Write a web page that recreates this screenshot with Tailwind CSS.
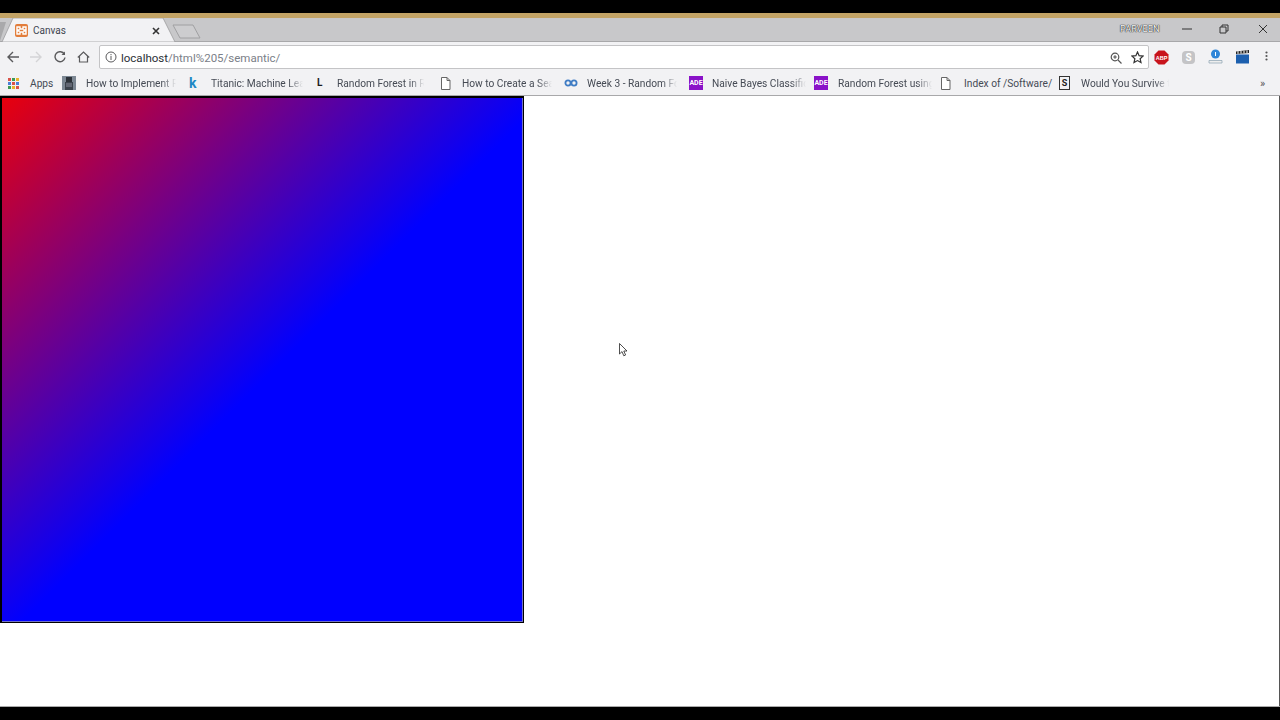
<!DOCTYPE html>
<html>
<head>
<meta charset="utf-8">
<script src="https://cdn.jsdelivr.net/npm/@tailwindcss/browser@4"></script>
<title>Canvas</title>
</head>
<body class="m-0 bg-black overflow-hidden">
<div class="w-[1280px] h-[720px] flex flex-col bg-black font-['Roboto',sans-serif] overflow-hidden">
  <div class="h-[13px] shrink-0 bg-black"></div>
  <div class="h-[5px] shrink-0 bg-[#c2a365]"></div>
  <!-- Title bar -->
  <div class="h-[24px] shrink-0 bg-[#c8c8ca] border-b border-[#a8a8aa] flex relative">
    <div class="w-[180px] h-[24px] relative shrink-0">
      <svg class="absolute left-0 top-0" width="205" height="24" viewBox="0 0 205 24">
        <path d="M0 23 L0 4 L6 4 Z" fill="#a9a9ab"/>
        <path d="M2 24 L13 0 H163 L175 24 Z" fill="#f2f2f4" stroke="#9c9c9e" stroke-width="0.8"/>
        <path d="M173 7 H193 L200 20 H180 Z" fill="#cdcdcf" stroke="#a0a0a2" stroke-width="1"/>
      </svg>
      <div class="absolute left-[15px] top-[6px] w-[13px] h-[13px] rounded-[2px] bg-[#e27d3b] flex items-center justify-center">
        <svg width="11" height="9" viewBox="0 0 11 9" fill="none" stroke="#fff" stroke-width="1.4"><path d="M1 1 H4 V3 H7 V1 H10 V4 H8 V5 H10 V8 H7 V6 H4 V8 H1 V5 H3 V4 H1 Z"/></svg>
      </div>
      <span class="absolute left-[33px] top-[4px] text-[10px] leading-[17px] text-[#3e4550]">Canvas</span>
      <svg class="absolute left-[152px] top-[9px]" width="8" height="8" viewBox="0 0 8 8" stroke="#333" stroke-width="1.6"><path d="M1 1 L7 7 M7 1 L1 7"/></svg>
    </div>
    <div class="flex-1"></div>
    <span class="absolute left-[1120px] top-[4px] text-[9.2px] leading-[14px] text-[#f4f4f4] [text-shadow:0_0_1px_#333,0_0_1px_#333,0_0_1px_#333]">PARVEEN</span>
    <svg class="absolute left-[1182px] top-[6px]" width="10" height="10" viewBox="0 0 10 10" stroke="#333" stroke-width="1"><path d="M0 5 H10"/></svg>
    <svg class="absolute left-[1219px] top-[6px]" width="10" height="10" viewBox="0 0 10 10" fill="none" stroke="#333" stroke-width="1"><path d="M1 3 H7 V9 H1 Z M3 3 V1 H9 V7 H7"/></svg>
    <svg class="absolute left-[1258px] top-[6px]" width="10" height="10" viewBox="0 0 10 10" stroke="#333" stroke-width="1"><path d="M1 1 L9 9 M9 1 L1 9"/></svg>
  </div>
  <!-- Toolbar -->
  <div class="h-[30px] shrink-0 bg-[#f2f2f4] flex items-center relative">
    <div class="w-[99px] shrink-0 h-full relative">
      <svg class="absolute left-[7px] top-[9px]" width="12" height="12" viewBox="0 0 12 12" fill="none" stroke="#5a5a5c" stroke-width="1.4"><path d="M12 6 H1 M6 1 L1 6 L6 11"/></svg>
      <svg class="absolute left-[30px] top-[9px]" width="12" height="12" viewBox="0 0 12 12" fill="none" stroke="#d4d4d6" stroke-width="1.4"><path d="M0 6 H11 M6 1 L11 6 L6 11"/></svg>
      <svg class="absolute left-[54px] top-[9px]" width="12" height="12" viewBox="0 0 12 12" fill="none" stroke="#5a5a5c" stroke-width="1.4"><path d="M10.4 3.2 A5 5 0 1 0 11 6.5"/><path d="M11 0.5 V4 H7.5 Z" fill="#5a5a5c" stroke="none"/></svg>
      <svg class="absolute left-[77px] top-[9px]" width="13" height="12" viewBox="0 0 13 12" fill="none" stroke="#5a5a5c" stroke-width="1.2"><path d="M0.8 6.5 L6.5 1 L12.2 6.5 M2.5 5.5 V11 H10.5 V5.5"/></svg>
    </div>
    <div class="w-[1050px] h-[24px] shrink-0 bg-white border border-[#c4c4c6] rounded-[2px] flex items-center relative">
      <svg class="ml-[5px] shrink-0" width="12" height="12" viewBox="0 0 12 12" fill="none" stroke="#5a5a5c" stroke-width="1"><circle cx="6" cy="6" r="5"/><path d="M6 5 V9 M6 3 V4.2"/></svg>
      <span class="ml-[4px] mt-[1px] text-[11.5px] leading-[16px] whitespace-nowrap"><span class="text-[#2b2f36]">localhost</span><span class="text-[#7b8088]">/html%205/semantic/</span></span>
      <svg class="absolute left-[1010px] top-[6px]" width="12" height="12" viewBox="0 0 12 12" fill="none" stroke="#555" stroke-width="1.2"><circle cx="5" cy="5" r="3.8"/><path d="M8 8 L11.5 11.5 M3.2 5 H6.8 M5 3.2 V6.8"/></svg>
      <svg class="absolute left-[1031px] top-[5px]" width="13" height="13" viewBox="0 0 13 13" fill="none" stroke="#333" stroke-width="1.2"><path d="M6.5 1 L8.1 4.7 L12 5.1 L9.1 7.7 L10 11.6 L6.5 9.6 L3 11.6 L3.9 7.7 L1 5.1 L4.9 4.7 Z"/></svg>
    </div>
    <div class="flex-1 h-full relative">
      <svg class="absolute left-[5px] top-[8px]" width="15" height="15" viewBox="0 0 15 15"><path d="M4.5 0.5 H10.5 L14.5 4.5 V10.5 L10.5 14.5 H4.5 L0.5 10.5 V4.5 Z" fill="#c8141c"/><text x="7.5" y="9.5" text-anchor="middle" font-size="5.5" font-weight="700" fill="#fff" font-family="Liberation Sans">ABP</text></svg>
      <div class="absolute left-[33px] top-[9px] w-[13px] h-[13px] rounded-[4px] bg-[#c4c4c6] text-white text-[10px] leading-[13px] text-center font-bold">S</div>
      <svg class="absolute left-[59px] top-[7px]" width="15" height="15" viewBox="0 0 15 15"><circle cx="7.5" cy="5" r="4.5" fill="#2f86d8"/><rect x="7" y="3" width="1" height="4" fill="#fff"/><path d="M1 11.5 H14 V14 H1 Z" fill="#eee" stroke="#8aa0b0" stroke-width="0.7"/></svg>
      <svg class="absolute left-[86px] top-[8px]" width="15" height="14" viewBox="0 0 15 14"><rect x="1" y="4.5" width="13" height="9" fill="#1c5fae"/><path d="M1 1.5 L14 0 V3 L1 4 Z" fill="#222"/><path d="M3 1.2 V3.8 M6 1 V3.6 M9 .7 V3.3 M12 .4 V3" stroke="#fff" stroke-width="1"/></svg>
      <svg class="absolute left-[116px] top-[9px]" width="3" height="11" viewBox="0 0 3 11" fill="#555"><circle cx="1.5" cy="1.5" r="1.1"/><circle cx="1.5" cy="5" r="1.1"/><circle cx="1.5" cy="8.5" r="1.1"/></svg>
    </div>
  </div>
  <!-- Bookmarks bar -->
  <div class="h-[24px] shrink-0 bg-[#f2f2f4] border-b border-[#a8a8aa] flex items-center text-[10.2px] text-[#454a54] whitespace-nowrap">
    <div class="w-[62px] shrink-0 flex items-center">
      <svg class="ml-[8px] shrink-0" width="11" height="11" viewBox="0 0 11 11"><g fill="#d9534a"><rect x="0" y="0" width="3" height="3"/><rect x="8" y="8" width="3" height="3"/></g><g fill="#3d9a54"><rect x="4" y="0" width="3" height="3"/><rect x="0" y="8" width="3" height="3"/></g><g fill="#e8b52e"><rect x="8" y="0" width="3" height="3"/><rect x="4" y="8" width="3" height="3"/></g><g fill="#4a80d8"><rect x="0" y="4" width="3" height="3"/><rect x="8" y="4" width="3" height="3"/></g><rect x="4" y="4" width="3" height="3" fill="#d9534a"/></svg>
      <span class="ml-[11px]">Apps</span>
    </div>
    <div class="w-[125px] shrink-0 flex items-center">
      <svg class="shrink-0" width="14" height="14" viewBox="0 0 14 14"><rect width="14" height="14" fill="#7d8894"/><rect x="4" y="1" width="6" height="5" fill="#2c3138"/><rect x="3" y="6" width="8" height="8" fill="#3c434c"/><path d="M4 8 H10 M4 10 H10" stroke="#aab" stroke-width=".7"/></svg>
      <span class="ml-[10px] [mask-image:linear-gradient(90deg,#000_82%,transparent_98%)]">How to Implement R</span>
    </div>
    <div class="w-[126px] shrink-0 flex items-center">
      <span class="w-[14px] pl-[2px] text-[#1f88c4] text-[14px] leading-[14px] font-bold">k</span>
      <span class="ml-[10px] [mask-image:linear-gradient(90deg,#000_82%,transparent_98%)]">Titanic: Machine Lea</span>
    </div>
    <div class="w-[125px] shrink-0 flex items-center">
      <span class="w-[14px] pl-[4px] text-[#1c1c1c] text-[10px] leading-[14px] font-bold">L</span>
      <span class="ml-[10px] [mask-image:linear-gradient(90deg,#000_82%,transparent_98%)]">Random Forest in R</span>
    </div>
    <div class="w-[125px] shrink-0 flex items-center">
      <svg class="ml-[1px] shrink-0" width="13" height="13" viewBox="0 0 13 13" fill="#fff" stroke="#666" stroke-width="1"><path d="M2.5 .5 H8 L11 3.5 V12.5 H2.5 Z M8 .5 V3.5 H11"/></svg>
      <span class="ml-[10px] [mask-image:linear-gradient(90deg,#000_82%,transparent_98%)]">How to Create a Sea</span>
    </div>
    <div class="w-[125px] shrink-0 flex items-center">
      <svg class="ml-[1px] shrink-0" width="14" height="14" viewBox="0 0 14 14" fill="none" stroke="#3f7cc4" stroke-width="1.8"><circle cx="4" cy="7" r="2.6"/><circle cx="10" cy="7" r="2.6"/></svg>
      <span class="ml-[9px] [mask-image:linear-gradient(90deg,#000_82%,transparent_98%)]">Week 3 - Random Fc</span>
    </div>
    <div class="w-[125px] shrink-0 flex items-center">
      <span class="ml-[1px] w-[14px] h-[14px] shrink-0 bg-[#8a12c8] text-white text-[7px] leading-[14px] text-center overflow-hidden font-bold">ADE</span>
      <span class="ml-[9px] [mask-image:linear-gradient(90deg,#000_82%,transparent_98%)]">Naive Bayes Classific</span>
    </div>
    <div class="w-[125px] shrink-0 flex items-center">
      <span class="ml-[1px] w-[14px] h-[14px] shrink-0 bg-[#8a12c8] text-white text-[7px] leading-[14px] text-center overflow-hidden font-bold">ADE</span>
      <span class="ml-[10px] [mask-image:linear-gradient(90deg,#000_82%,transparent_98%)]">Random Forest using</span>
    </div>
    <div class="w-[120px] shrink-0 flex items-center">
      <svg class="ml-[1px] shrink-0" width="13" height="13" viewBox="0 0 13 13" fill="#fff" stroke="#666" stroke-width="1"><path d="M2.5 .5 H8 L11 3.5 V12.5 H2.5 Z M8 .5 V3.5 H11"/></svg>
      <span class="ml-[12px]">Index of /Software/</span>
    </div>
    <div class="w-[198px] shrink-0 flex items-center">
      <span class="ml-[1px] w-[11px] h-[14px] shrink-0 border border-[#333] text-[#222] text-[9px] leading-[12px] text-center font-bold">S</span>
      <span class="ml-[11px] [mask-image:linear-gradient(90deg,#000_82%,transparent_98%)]">Would You Survive t</span>
    </div>
    <span class="ml-[4px] text-[11px] leading-[14px] text-[#555]">»</span>
  </div>
  <!-- Page -->
  <div class="flex-1 bg-white min-h-0 relative border-r border-[#555]">
    <div class="w-[524px] h-[527px] border border-black border-l-2 border-t-2 shadow-[inset_-1px_-1px_0_#7272c4] bg-[linear-gradient(135deg,#e8000c_0%,#0000ff_52%)]"></div>
    <svg class="absolute left-[619px] top-[247px]" width="9" height="14" viewBox="0 0 9 14" fill="#fff" stroke="#222" stroke-width="0.8"><path d="M.5 .5 V11 L3 8.6 L4.8 12.8 L6.6 12 L4.8 8 H8 Z"/></svg>
  </div>
  <div class="h-[1px] shrink-0 bg-[#aaaaaa]"></div>
  <div class="h-[13px] shrink-0 bg-black"></div>
</div>
</body>
</html>
